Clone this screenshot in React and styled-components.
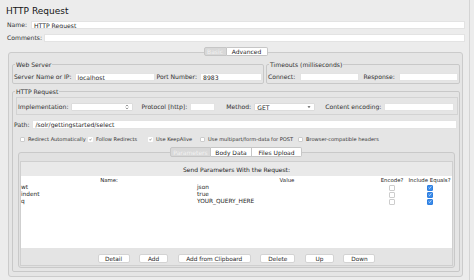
import React from 'react'
import styled, { createGlobalStyle } from 'styled-components'

const GlobalStyle = createGlobalStyle`
  html, body { margin: 0; padding: 0; background: #ececec; }
  body { font-family: "DejaVu Sans", "Liberation Sans", sans-serif; color: #2c2c2c; }
  * { box-sizing: border-box; }
`

const Window = styled.div`
  width: 474px;
  height: 280px;
  overflow: hidden;
  display: flex;
  background: #ececec;
`

const Main = styled.div`
  width: 470px;
  height: 280px;
  border-right: 1px solid #d4d4d4;
  padding: 0 4px 0 6px;
  display: flex;
  flex-direction: column;
`

const Title = styled.div`
  font-size: 9px;
  line-height: 10px;
  height: 20px;
  padding-top: 6px;
  color: #141414;
`

const FieldRow = styled.div`
  display: flex;
  align-items: center;
  height: ${p => p.$h || 8}px;
  margin-top: ${p => p.$mt || 0}px;
  padding-left: ${p => p.$pl || 0}px;
  margin-right: ${p => p.$mr || 0}px;
`

const Label = styled.span`
  font-size: 6.1px;
  line-height: 8px;
  color: #303030;
  white-space: nowrap;
  margin-left: ${p => p.$ml || 0}px;
`

const Input = styled.div`
  height: ${p => p.$h || 8}px;
  background: #fff;
  border: 1px solid #e3e3e3;
  font-size: 6.1px;
  color: #262626;
  padding-left: 2px;
  display: flex;
  align-items: center;
  white-space: nowrap;
  overflow: hidden;
  flex: ${p => (p.$w ? `0 0 ${p.$w}px` : '1 1 0')};
  margin-left: ${p => p.$ml || 0}px;
`

const Select = styled(Input)`
  justify-content: space-between;
  padding-right: 3px;
  border-color: #dcdcdc;
  border-radius: 1px;
`

const TabBar = styled.div`
  display: flex;
  justify-content: center;
  height: ${p => p.$h}px;
  margin-top: ${p => p.$mt}px;
  margin-bottom: -${p => p.$overlap}px;
  position: relative;
  z-index: 1;
`

const Tab = styled.div`
  width: ${p => p.$w}px;
  height: 100%;
  display: flex;
  align-items: center;
  justify-content: center;
  font-size: 6px;
  background: ${p => (p.$active ? '#d8d8d8' : '#fff')};
  color: ${p => (p.$active ? '#f2f2f2' : '#262626')};
  border: 1px solid #c6c6c6;
  border-left-width: 0;
  &:first-child { border-left-width: 1px; border-radius: 2px 0 0 2px; }
  &:last-child { border-radius: 0 2px 2px 0; }
`

const Panel = styled.div`
  flex: 1;
  margin: 0 2px 3px 2px;
  background: #e5e5e5;
  border: 1px solid #cbcbcb;
  border-radius: 3px;
  padding: 8px 2px 4px 3px;
  display: flex;
  flex-direction: column;
`

const GroupRow = styled.div`
  display: flex;
  gap: 2px;
`

const Group = styled.fieldset`
  margin: ${p => p.$mt || 0}px 0 0 0;
  padding: ${p => (p.$fill ? '1px 1px 3px 1px' : '5px 1px 2px 1px')};
  border: 1px solid #c8c8c8;
  border-radius: 2px;
  min-width: 0;
  flex: ${p => (p.$w ? `0 0 ${p.$w}px` : '1 1 0')};
  display: flex;
  flex-direction: column;
`

const Legend = styled.legend`
  font-size: 6.1px;
  line-height: 7px;
  padding: 0 1px;
  margin-left: 1px;
  color: #303030;
`

const ImplBox = styled.div`
  margin: 1px 0 0 2px;
  border: 1px solid #d3d3d3;
  padding: 5px 3px 3px 1px;
  display: flex;
  align-items: center;
`

const CheckRow = styled.div`
  display: flex;
  align-items: center;
  height: 8px;
  margin-top: 6px;
  padding-left: 6px;
`

const CheckItem = styled.div`
  display: flex;
  align-items: center;
  gap: 3px;
  flex: ${p => (p.$w ? `0 0 ${p.$w}px` : '1 1 0')};
  font-size: 5.1px;
  color: #333;
  white-space: nowrap;
`

const Box = styled.span`
  width: ${p => p.$s || 5}px;
  height: ${p => p.$s || 5}px;
  flex: none;
  display: inline-flex;
  align-items: center;
  justify-content: center;
  border-radius: 1px;
  background: ${p => (p.$blue ? '#3a8bea' : '#fff')};
  border: 1px solid ${p => (p.$blue ? '#2f7fe0' : p.$plain ? 'transparent' : '#cdcdcd')};
`

const SubPanel = styled.div`
  flex: 1;
  margin: 0 3px 0 4px;
  background: #e1e1e1;
  border: 1px solid #c9c9c9;
  border-radius: 3px;
  padding: 8px 1px 1px 1px;
  display: flex;
  flex-direction: column;
`

const ParamBox = styled.div`
  flex: 1;
  border: 1px solid #cfcfcf;
  display: flex;
  flex-direction: column;
  background: #e6e6e6;
`

const ParamHeader = styled.div`
  height: 14px;
  display: flex;
  align-items: center;
  justify-content: center;
  font-size: 6px;
  color: #1a1a1a;
  background: #e9e9e9;
`

const Table = styled.div`
  flex: 1;
  background: #fff;
  display: grid;
  grid-template-columns: 176px 180px 30px 1fr;
  grid-auto-rows: 7px;
  grid-template-rows: 8px;
  align-content: start;
`

const Cell = styled.div`
  font-size: ${p => (p.$head ? 5.4 : 5.8)}px;
  line-height: 7px;
  color: #262626;
  white-space: nowrap;
  display: flex;
  align-items: center;
  justify-content: ${p => (p.$center ? 'center' : 'flex-start')};
`

const ButtonBar = styled.div`
  height: 17px;
  padding-top: 6px;
  display: flex;
  justify-content: center;
  align-items: flex-start;
  gap: 9.6px;
  background: #e4e4e4;
`

const Button = styled.div`
  width: ${p => p.$w}px;
  height: 9px;
  background: #fff;
  border: 1px solid #d3d3d3;
  border-radius: 2px;
  font-size: 5.8px;
  color: #262626;
  display: flex;
  align-items: center;
  justify-content: center;
  white-space: nowrap;
`

const Check = ({ color = '#333' }) => (
  <svg width="5" height="5" viewBox="0 0 5 5">
    <path d="M0.9 2.6 L2 3.8 L4.2 1" fill="none" stroke={color} strokeWidth="0.8" />
  </svg>
)

const UpDown = () => (
  <svg width="4" height="6" viewBox="0 0 4 6">
    <path d="M0.8 2.3 L2 1 L3.2 2.3 M0.8 3.7 L2 5 L3.2 3.7" fill="none" stroke="#555" strokeWidth="0.6" />
  </svg>
)

const Down = () => (
  <svg width="4" height="4" viewBox="0 0 4 4">
    <path d="M0.5 1.2 L3.5 1.2 L2 3 Z" fill="#555" />
  </svg>
)

const options = [
  { label: 'Redirect Automatically', on: false, w: 68 },
  { label: 'Follow Redirects', on: true, w: 60 },
  { label: 'Use KeepAlive', on: true, w: 52 },
  { label: 'Use multipart/form-data for POST', on: false, w: 98 },
  { label: 'Browser-compatible headers', on: false },
]

const params = [
  ['wt', 'json'],
  ['indent', 'true'],
  ['q', 'YOUR_QUERY_HERE'],
]

const buttons = [
  ['Detail', 32],
  ['Add', 29],
  ['Add from Clipboard', 73],
  ['Delete', 35],
  ['Up', 29],
  ['Down', 32],
]

export default function App() {
  return (
    <Window>
      <GlobalStyle />
      <Main>
        <Title>HTTP Request</Title>
        <FieldRow $mt={1} $pl={1}>
          <Label>Name:</Label>
          <Input $ml={4}>HTTP Request</Input>
        </FieldRow>
        <FieldRow $mt={5} $pl={1}>
          <Label>Comments:</Label>
          <Input $ml={2} />
        </FieldRow>

        <TabBar $h={9} $mt={5} $overlap={4}>
          <Tab $w={23} $active>Basic</Tab>
          <Tab $w={41}>Advanced</Tab>
        </TabBar>

        <Panel>
          <GroupRow>
            <Group $w={252}>
              <Legend>Web Server</Legend>
              <FieldRow>
                <Label>Server Name or IP:</Label>
                <Input $ml={3}>localhost</Input>
                <Label $ml={2}>Port Number:</Label>
                <Input $w={62} $ml={3}>8983</Input>
              </FieldRow>
            </Group>
            <Group>
              <Legend>Timeouts (milliseconds)</Legend>
              <FieldRow>
                <Label>Connect:</Label>
                <Input $ml={5} />
                <Label $ml={4}>Response:</Label>
                <Input $ml={4} />
              </FieldRow>
            </Group>
          </GroupRow>

          <Group $mt={4} $fill>
            <Legend>HTTP Request</Legend>
            <ImplBox>
              <Label>Implementation:</Label>
              <Select $w={62} $ml={3}>
                <span />
                <UpDown />
              </Select>
              <Label $ml={8}>Protocol [http]:</Label>
              <Input $w={25} $ml={3} />
              <Label $ml={11}>Method:</Label>
              <Select $w={61} $ml={3}>
                <span>GET</span>
                <Down />
              </Select>
              <Label $ml={10}>Content encoding:</Label>
              <Input $ml={3} />
            </ImplBox>

            <FieldRow $h={9} $mt={5} $mr={1}>
              <Label>Path:</Label>
              <Input $h={9} $ml={3}>/solr/gettingstarted/select</Input>
            </FieldRow>

            <CheckRow>
              {options.map(o => (
                <CheckItem key={o.label} $w={o.w}>
                  <Box $plain={o.on}>{o.on && <Check />}</Box>
                  {o.label}
                </CheckItem>
              ))}
            </CheckRow>

            <TabBar $h={10} $mt={4} $overlap={5}>
              <Tab $w={41} $active>Parameters</Tab>
              <Tab $w={41}>Body Data</Tab>
              <Tab $w={50}>Files Upload</Tab>
            </TabBar>

            <SubPanel>
              <ParamBox>
                <ParamHeader>Send Parameters With the Request:</ParamHeader>
                <Table>
                  <Cell $head $center>Name:</Cell>
                  <Cell $head $center>Value</Cell>
                  <Cell $head $center>Encode?</Cell>
                  <Cell $head $center>Include Equals?</Cell>
                  {params.map(([name, value]) => (
                    <React.Fragment key={name}>
                      <Cell>{name}</Cell>
                      <Cell>{value}</Cell>
                      <Cell $center><Box $s={6} /></Cell>
                      <Cell $center><Box $s={6} $blue><Check color="#fff" /></Box></Cell>
                    </React.Fragment>
                  ))}
                </Table>
                <ButtonBar>
                  {buttons.map(([text, w]) => (
                    <Button key={text} $w={w}>{text}</Button>
                  ))}
                </ButtonBar>
              </ParamBox>
            </SubPanel>
          </Group>
        </Panel>
      </Main>
    </Window>
  )
}
